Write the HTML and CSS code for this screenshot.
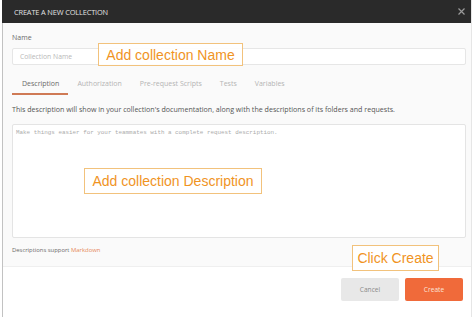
FILE: index.html
```html
<!DOCTYPE html>
<html>
<head>
<meta charset="utf-8">
<link rel="stylesheet" href="styles.css">
</head>
<body>
<div class="dialog">
  <div class="header">
    <span class="title">CREATE A NEW COLLECTION</span>
    <svg class="close" width="7" height="7" viewBox="0 0 7 7"><path d="M0.5 0.5L6.5 6.5M6.5 0.5L0.5 6.5" stroke="#9a9a9a" stroke-width="1.2"/></svg>
  </div>
  <div class="content">
    <div class="label">Name</div>
    <div class="input">Collection Name</div>
    <div class="tabs">
      <div class="tab active">Description</div>
      <div class="tab">Authorization</div>
      <div class="tab">Pre-request Scripts</div>
      <div class="tab">Tests</div>
      <div class="tab">Variables</div>
    </div>
    <div class="help">This description will show in your collection's documentation, along with the descriptions of its folders and requests.</div>
    <div class="textarea">Make things easier for your teammates with a complete request description.</div>
    <div class="md">Descriptions support <span class="link">Markdown</span></div>
  </div>
  <div class="footer">
    <div class="btn cancel">Cancel</div>
    <div class="btn create">Create</div>
  </div>
  <div class="note note-name">Add collection Name</div>
  <div class="note note-desc">Add collection Description</div>
  <div class="note note-create">Click Create</div>
</div>
</body>
</html>
```
FILE: styles.css
```css
html, body {
  margin: 0;
  padding: 0;
  background: #ffffff;
  width: 474px;
  height: 317px;
  overflow: hidden;
}
.dialog {
  position: relative;
  margin-left: 2px;
  width: 468px;
  height: 317px;
  border-left: 1px solid #c2c2c2;
  border-right: 1px solid #e6e6e6;
  font-family: "Open Sans", "Liberation Sans", sans-serif;
  background: #fafafa;
}
.header {
  height: 23px;
  background: #2a2a2a;
  display: flex;
  align-items: center;
  justify-content: space-between;
  padding: 0 6px 0 12px;
  margin-left: -1px;
}
.title {
  font-size: 7.4px;
  letter-spacing: -0.15px;
  color: #e2e2e2;
}
.close {
  display: block;
}
.content {
  padding: 10px 5px 0 9px;
}
.label {
  font-size: 7px;
  line-height: 10px;
  color: #6a6a6a;
}
.input {
  margin-top: 5px;
  height: 15px;
  border: 1px solid #e6e6e6;
  background: #fff;
  border-radius: 2px;
  font-size: 6.8px;
  line-height: 15px;
  padding-left: 7px;
  color: #b8b8b8;
}
.tabs {
  margin-top: 12px;
  display: flex;
  height: 18px;
}
.tab {
  padding: 0 9px 2px 9px;
  font-size: 7px;
  line-height: 14px;
  color: #b4b4b4;
}
.tab.active {
  padding-left: 10px;
  color: #6a6a6a;
  border-bottom: 2px solid #cf7a55;
}
.help {
  margin-top: 9px;
  font-size: 7.1px;
  line-height: 10px;
  color: #555555;
  white-space: nowrap;
}
.textarea {
  margin-top: 10px;
  border: 1px solid #e4e4e4;
  background: #fff;
  border-radius: 2px;
  padding: 4px 0 0 3px;
  box-sizing: border-box;
  height: 114px;
  font-family: "Liberation Mono", "DejaVu Sans Mono", monospace;
  font-size: 5.9px;
  line-height: 8px;
  color: #ababab;
}
.md {
  margin-top: 7px;
  font-size: 5.9px;
  line-height: 10px;
  color: #6a6a6a;
}
.link {
  color: #e6895c;
}
.footer {
  margin-top: 11px;
  border-top: 1px solid #efefef;
  background: #ffffff;
  display: flex;
  justify-content: flex-end;
  gap: 6px;
  padding: 11px 8px 0 0;
  height: 40px;
}
.btn {
  width: 58px;
  height: 23px;
  border-radius: 2px;
  font-size: 6.6px;
  line-height: 23px;
  text-align: center;
}
.cancel {
  background: #e8e8e8;
  color: #8a8a8a;
}
.create {
  background: #f06a3a;
  color: #fbe4d9;
}
.note {
  position: absolute;
  box-sizing: border-box;
  border: 1px solid #f2c27c;
  background: rgba(255, 255, 255, 0.92);
  font-family: "Liberation Sans", Arial, sans-serif;
  font-size: 14px;
  color: #f0941f;
  display: flex;
  align-items: center;
  justify-content: center;
}
.note-name {
  left: 95px;
  top: 43px;
  width: 145px;
  height: 23px;
}
.note-desc {
  left: 81px;
  top: 168px;
  width: 178px;
  height: 26px;
}
.note-create {
  left: 349px;
  top: 245px;
  width: 87px;
  height: 26px;
}
```
